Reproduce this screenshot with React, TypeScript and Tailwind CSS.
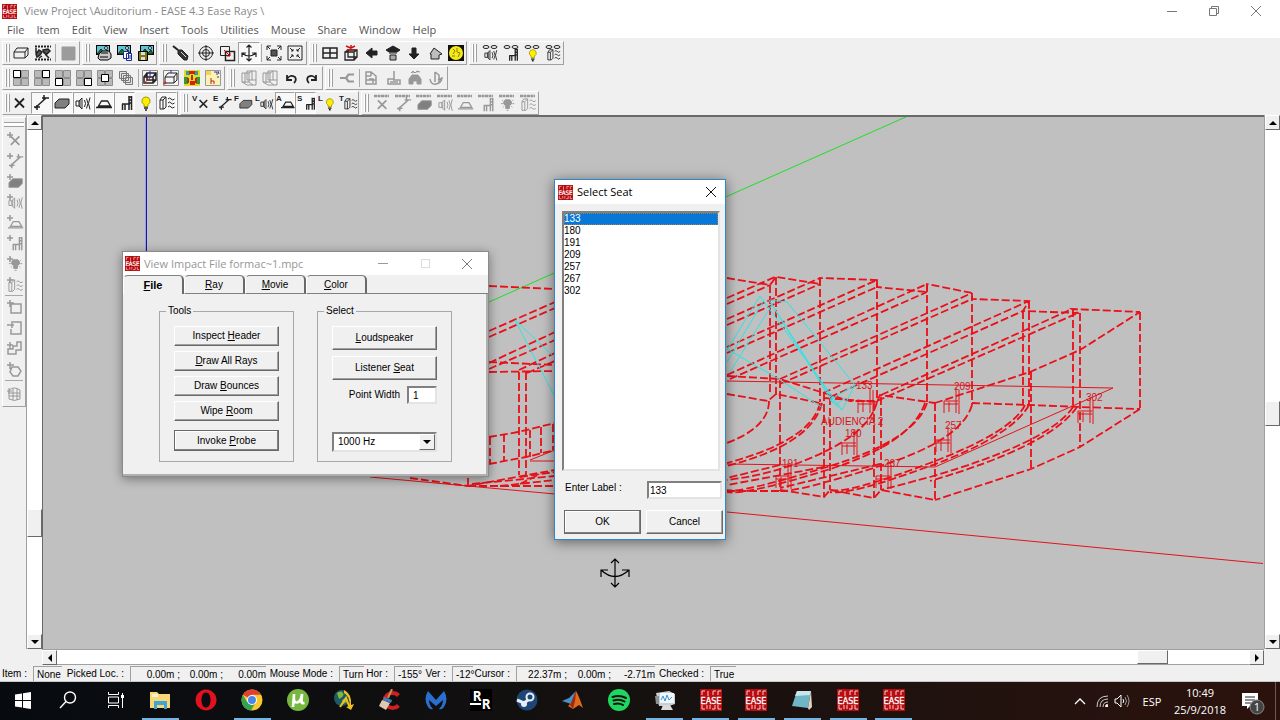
import { useState } from "react";
import type { ReactNode } from "react";
import clsx from "clsx";

const UI = "font-['Liberation_Sans',Arial,sans-serif]";
const SEGOE = "font-['Open_Sans','Noto_Sans',sans-serif]";

/* ---------- toolbar glyphs, all on a 16 x 16 grid ---------- */

const quad = (
  <path d="M0.500 0.500h7v7h-7zM8.500 0.500h7v7h-7zM0.500 8.500h7v7h-7zM8.500 8.500h7v7h-7z" fill="#b9b9b9" stroke="#8e8e8e" />
);

const picture = (
  <g>
    <rect x="0.500" y="0.500" width="13" height="9" fill="#5cc6d8" stroke="#000" />
    <path d="M1 9l4-5 3 4 3-3 2 4z" fill="#1e7a2a" />
    <circle cx="10" cy="3" r="1.500" fill="#fff" />
  </g>
);

const glyphs: Record<string, ReactNode> = {
  // room item kinds
  vertex: <path d="M3 3.500l9 9M12 3.500l-9 9" strokeWidth="1.800" />,
  edge: <path d="M2 13L13 3M11 0v5M9 3h7M4 10v5M1 12h6" strokeWidth="1.500" />,
  face: <path d="M1 13V8l4-4h10v5l-4 4z" fill="#808080" />,
  speaker: <path d="M1 6h3v5H1zM4 6l3-3v11l-3-3M5 5v7M9.500 5q2 3.500 0 7M11.500 3.500q3 5 0 10M15 2.500q-3 6 0 12" />,
  audience: <path d="M0 12.500h16M2.500 11l3-5h6l3 5z" strokeWidth="1.300" />,
  chair: <path d="M12 1v14M14.500 1v14M12 2h2M12 5h2M12 8h2M5 9h8M5.500 9v6M8 9v6" strokeWidth="1.500" />,
  lamp: (
    <g>
      <path d="M8 2a4 4 0 0 0-2 7.500v2h4v-2A4 4 0 0 0 8 2z" fill="#ffee00" stroke="#a09a00" />
      <path d="M6 13h4M7 15h2" strokeWidth="1.500" />
    </g>
  ),
  lampGray: <path d="M8 3a3 3 0 0 0-2 6v3h4V9A3 3 0 0 0 8 3zM7 14h2M2 3l1 1M14 3l-1 1M1 7h2M13 7h2M3 11l1-1M13 11l-1-1" fill="currentColor" />,
  absorber: <path d="M1 5l2-3h4v10l-2 2H1zM1 5h3v9M4 5l3-3M9 4q1.500-2 3 0t3.500 0M9 8q1.500-2 3 0t3.500 0M9 12q1.500-2 3 0t3.500 0" />,

  box: <path d="M1 7l3-4h11v7l-3 3H1zM1 7h11v6M12 7l3-4" />,
  film: (
    <g>
      <path d="M0 1.500h16M0 14.500h16" strokeWidth="2" strokeDasharray="2 1" />
      <path d="M1 3v5M1 9l3-4 3 2-2 3-3 2zM8 5l5-1 2 2-3 3-3-1zM10 9l4 4M7 11l-3 2" fill="#555" strokeWidth="1.500" />
    </g>
  ),
  stop: <path d="M2 2h13v13H2z" fill="#9b9b9b" stroke="#9b9b9b" />,
  printPic: (
    <g>
      {picture}
      <path d="M3 9l3-3h7l2 3v4l-3 2H4l-2-2z" fill="#c8c8c8" stroke="#000" />
      <path d="M5 8h7M4 12h8" stroke="#000" />
    </g>
  ),
  copyPic: (
    <g>
      {picture}
      <path d="M6.500 6.500h5v7h-5zM9.500 8.500h5v7h-5z" fill="#fff" stroke="#1a2a9a" />
      <path d="M11 11h3M11 13h3" stroke="#1a2a9a" />
    </g>
  ),
  savePic: (
    <g transform="translate(2 0)">
      {picture}
      <path d="M-1.500 6.500h9v9h-9z" fill="#7c7a10" stroke="#000" />
      <path d="M1 7h4v3H1zM1 12h4v3H1z" fill="#ddd" stroke="none" />
    </g>
  ),
  probe: (
    <g>
      <path d="M0 1l5 4" strokeWidth="2" />
      <path d="M5 5l4 0 6 6-1 4-3 0-6-6z" fill="#333" />
      <path d="M8 7l5 5" stroke="#ddd" />
    </g>
  ),
  target: (
    <g>
      <circle cx="8" cy="8" r="6.500" />
      <circle cx="8" cy="8" r="3.500" />
      <path d="M8 0v16M0 8h16" />
    </g>
  ),
  zoomRect: (
    <g>
      <path d="M1.500 1.500h9v9h-9z" />
      <path d="M6.500 6.500h9v9h-9z" strokeWidth="1.500" />
      <path d="M5 5l6 6M11 8v3H8" stroke="#d00000" />
    </g>
  ),
  turn: <path d="M8 0v16M5.500 2.500L8 0l2.500 2.500M5.500 13.500L8 16l2.500-2.500M1 8q7 6 14 0M1 12V8h4M15 12V8h-4" strokeWidth="1.200" />,
  fit: (
    <g>
      <path d="M5 5h6v6H5z" fill="#555" />
      <path d="M1 5V1h4M11 1h4v4M15 11v4h-4M5 15H1v-4M1 1l3 3M15 1l-3 3M15 15l-3-3M1 15l3-3" />
    </g>
  ),
  shrink: <path d="M1 1h14v14H1zM3 3l3 3M6 4v2H4M13 3l-3 3M10 4v2h2M3 13l3-3M4 10h2v2M13 13l-3-3M12 10h-2v2" />,
  panes: <path d="M1 3h14v10H1zM8 3v10M1 8h14" strokeWidth="1.500" />,
  wireRed: (
    <g>
      <path d="M2 7h9v8H2zM5 5h9v7H5zM2 7l3-2M11 7l3-2M11 15l3-3" strokeWidth="1.300" />
      <path d="M3 1l9 4M12 1L4 5M8 0v6" stroke="#c81414" strokeWidth="1.500" />
    </g>
  ),
  left: <path d="M2 8l6-5v3h5v4H8v3z" fill="currentColor" />,
  top: (
    <g>
      <path d="M1 5l7-4 7 4-3 2H4z" fill="currentColor" />
      <path d="M4 8h8M5 10h6v5H5z" fill="#aaa" />
    </g>
  ),
  down: <path d="M8 14L3 9h3V3h4v6h3z" fill="currentColor" />,
  house: <path d="M3 9l4-6 8 6-3 1v4H4V9z" fill="#bdbdbd" />,
  globe: (
    <g>
      <path d="M0 0h16v16H0z" fill="#111" stroke="none" />
      <circle cx="8" cy="8" r="7" fill="#f5e918" stroke="none" />
      <path d="M5 4l2 2-2 3M9 3v4l3 1-2 4M4 11h3" stroke="#8c7f00" />
    </g>
  ),
  paneA: <g>{quad}<path d="M0.500 0.500h7v7h-7z" fill="#fff" stroke="#000" /></g>,
  paneB: <g>{quad}<path d="M8.500 0.500h7v7h-7z" fill="#fff" stroke="#000" /></g>,
  paneC: <g>{quad}<path d="M0.500 8.500h7v7h-7z" fill="#fff" stroke="#000" /></g>,
  paneD: <g>{quad}<path d="M8.500 8.500h7v7h-7z" fill="#fff" stroke="#000" /></g>,
  paneE: <g>{quad}<path d="M4.500 4.500h7v7h-7z" fill="#fff" stroke="#000" /></g>,
  cascade: <path d="M1.500 1.500h7v7h-7zM3.500 3.500h7v7h-7zM5.500 5.500h7v7h-7zM7.500 7.500h7v7h-7z" fill="#e4e4e4" stroke="#777" />,
  cube: (
    <g>
      <path d="M0.500 0.500h15v15H0.500z" fill="#f4f4f4" stroke="#888" />
      <path d="M2 7h9v6H2zM5 3h9v7H5zM2 7l3-4M11 7l3-4M11 13l3-3" strokeWidth="1.500" />
      <path d="M8 1v7" stroke="#2222cc" />
      <path d="M2 13l6-5" stroke="#cc2222" />
    </g>
  ),
  cubeOpen: (
    <g>
      <path d="M0.500 0.500h15v15H0.500z" fill="#f4f4f4" stroke="#888" />
      <path d="M2 7h9v6H2zM2 7l3-4h9v7l-3 3M11 7l3-4" />
      <path d="M8 0v3" stroke="#2222cc" />
      <path d="M1 14l2-2" stroke="#cc2222" strokeWidth="2" />
    </g>
  ),
  heat: (
    <g stroke="none">
      <path d="M0 0h16v16H0z" fill="#e8d820" />
      <path d="M2 1h4v4H2zM10 1h4v4h-4z" fill="#28a0a8" />
      <path d="M5 1h6v3H5zM6 11h5v4H6z" fill="#d82010" />
      <path d="M0 7h4v7H0zM12 7h4v7h-4z" fill="#2f9c35" />
      <path d="M7 5h2v5H7zM3 8h2v5H3zM11 8h2v5h-2z" fill="#c02c10" />
    </g>
  ),
  scatter: (
    <g>
      <path d="M0.500 0.500h15v15H0.500z" fill="#fbf3b4" stroke="#999" />
      <path d="M9 2h3v3M13 1l1 3M12 7h2" stroke="#3030c0" />
      <path d="M6 8v6M6 11h3v3" stroke="#c02020" />
      <path d="M1 1h5v4H1z" fill="#f4d44a" stroke="none" />
    </g>
  ),
  mesh: <path d="M1 3h7v9H1zM6 1h9v9H6zM1 12l5 3h9v-5M8 3l3-2M8 12l4 3M11 1v9M4 3v10" />,
  undo: <path d="M4 5v5h5M4 9q3-5 8-2 2 3-1 6" strokeWidth="1.800" />,
  redo: <path d="M12 5v5H7M12 9q-3-5-8-2-2 3 1 6" strokeWidth="1.800" />,
  wrench: <path d="M1 8h6M15 4.500H9.500L7 8l2.500 3.500H15" strokeWidth="2.200" />,
  hall: <path d="M3 2h5l5 4v8H3zM3 6h5M6 9h4v4M3 10h10M8 2v4" strokeWidth="1.500" />,
  level: <path d="M9 1v8H3v5h12v-4H8M5 12h8" strokeWidth="1.500" />,
  car: <path d="M2 9l3-4h6l3 4v5h-4v-3H6v3H2zM4 3l2-2 2 2 2-2 3 1" fill="currentColor" />,
  hook: <path d="M2 9q1 6 6 5t6-6l-4 2M7 2v10M7 2l4 3v8" strokeWidth="1.500" />,
  // outline tools on the left
  square: <path d="M5 5h10v9H5zM1 4h7M4 1v7" strokeWidth="1.500" />,
  door: <path d="M5 2h10v12H5V9M1 5h7M6 3v5" strokeWidth="1.500" />,
  poly: <path d="M2 14h8v-4h5V2h-4v4H7v3H2zM1 5h6M4 2v7" strokeWidth="1.500" />,
  round: <path d="M6 6h6l3 4-3 5H7l-3-4zM1 4h7M4 1v7" strokeWidth="1.500" />,
  sphere: <path d="M3 4q5-4 11 0v9q-6 3-11 0zM3 7h11M3 10h11M7 3v11M11 3v11M1 5h5M3 2v6" />,
};

const bodyTransform = {
  plus: "translate(2 2) scale(0.95)",
  bar: "translate(1 2) scale(0.95)",
  eyes: "translate(2 3) scale(0.85)",
};

function Glyph({ name, mark, letter }: { name: string; mark?: "plus" | "bar" | "eyes"; letter?: string }) {
  return (
    <svg viewBox="0 0 16 16" className="size-4 overflow-visible" fill="none" stroke="currentColor" aria-hidden="true">
      <g transform={mark ? bodyTransform[mark] : letter ? "translate(4 2) scale(0.85)" : undefined}>{glyphs[name]}</g>
      {letter && (
        <text x="-1" y="6" fontSize="8" fontWeight="bold" fill="currentColor" stroke="none" fontFamily="Liberation Sans">
          {letter}
        </text>
      )}
      {mark === "plus" && <path d="M1 4h6M4 1v6" strokeWidth="1.500" />}
      {mark === "bar" && <path d="M0 1h15" strokeWidth="2.500" strokeDasharray="3 0.500" />}
      {mark === "eyes" && (
        <g>
          <ellipse cx="4" cy="2" rx="3" ry="1.500" />
          <ellipse cx="12" cy="2" rx="3" ry="1.500" />
        </g>
      )}
    </svg>
  );
}

interface Tool {
  id: string;
  label: string;
  on?: boolean;
  mark?: "plus" | "bar" | "eyes";
  letter?: string;
  off?: boolean;
}

function ToolButton({ tool }: { tool: Tool }) {
  return (
    <button
      type="button"
      aria-label={tool.label}
      aria-pressed={tool.on}
      className={clsx(
        "flex min-w-0 flex-1 items-center justify-center border",
        tool.on ? "border-t-[#a0a0a0] border-l-[#a0a0a0] border-r-white border-b-white bg-[#f8f8f8]" : "border-transparent",
        tool.off ? "text-[#989898]" : "text-[#222]"
      )}
    >
      <Glyph name={tool.id} mark={tool.mark} letter={tool.letter} />
    </button>
  );
}

function ToolGroup({ tools, className, first }: { tools: (Tool | null)[]; className: string; first?: boolean }) {
  return (
    <div role="toolbar" className={clsx("flex h-6 border border-t-white border-l-white border-r-[#a0a0a0] border-b-[#a0a0a0]", className)}>
      <div className={clsx("flex shrink-0 gap-px py-0.5 pl-0.5", first ? "w-[7px]" : "w-2.5")}>
        <span className="w-[2px] border-r border-[#a0a0a0] bg-white" />
        <span className="w-[2px] border-r border-[#a0a0a0] bg-white" />
      </div>
      {tools.map((t, i) =>
        t ? <ToolButton key={i} tool={t} /> : <span key={i} className="mx-px my-0.5 w-px shrink-0 bg-[#a8a8a8]" />
      )}
    </div>
  );
}

const kinds = ["vertex", "edge", "face", "speaker", "audience", "chair", "lamp", "absorber"];
const letters = ["V", "E", "F", "L", "A", "S", "L", "T"];
const grayKinds = kinds.map((k) => (k === "lamp" ? "lampGray" : k));
const t = (id: string, extra?: Partial<Tool>): Tool => ({ id, label: id, ...extra });

const rows: { className: string; tools: (Tool | null)[] }[][] = [
  [
    { className: "w-[78px]", tools: [t("box"), t("film"), null, t("stop")] },
    { className: "w-[75px]", tools: [t("printPic"), t("copyPic"), t("savePic")] },
    { className: "w-[148px]", tools: [t("probe"), null, t("target"), t("zoomRect"), t("turn", { on: true }), null, t("fit"), t("shrink")] },
    { className: "w-[158px]", tools: [t("panes"), t("wireRed"), t("left"), t("top"), t("down"), t("house"), t("globe")] },
    { className: "w-[95px]", tools: ["speaker", "chair", "lamp", "absorber"].map((k) => t(k, { mark: "eyes", label: `show ${k}` })) },
  ],
  [
    {
      className: "w-[223px]",
      tools: [t("paneA"), t("paneB"), t("paneC"), t("paneD"), t("paneE"), t("cascade"), null, t("cube"), t("cubeOpen"), t("heat"), t("scatter")],
    },
    { className: "w-[96px]", tools: [t("mesh", { off: true }), t("mesh", { off: true }), t("undo"), t("redo")] },
    { className: "w-[123px]", tools: [t("wrench", { off: true }), null, t("hall", { off: true }), t("level", { off: true }), t("car", { off: true }), t("hook", { off: true })] },
  ],
  [
    { className: "w-[176px]", tools: kinds.map((k) => t(k, { on: k !== "vertex" && k !== "lamp" })) },
    { className: "w-[179px]", tools: kinds.map((k, i) => t(k, { letter: letters[i], on: k === "audience" || k === "chair", label: `label ${k}` })) },
    { className: "w-[178px]", tools: grayKinds.map((k) => t(k, { mark: "bar", off: true, label: `hide ${k}` })) },
  ],
];

/* ---------- small shared parts ---------- */

function EaseLogo({ className }: { className: string }) {
  return (
    <svg viewBox="0 0 22 22" className={className} aria-hidden="true">
      <rect width="22" height="22" fill="#b80c10" />
      <text x="11" y="15" textAnchor="middle" fontSize="9" fill="#fff" stroke="#fff" strokeWidth="0.300" fontFamily="'DejaVu Sans Condensed','DejaVu Sans',sans-serif">
        EASE
      </text>
      <path d="M2 2v4M2 2h3M8 2v5M13 2h3M13 2v4M18 2h3M18 2v4M2 20v-4M2 20h3M7 20v-4M10 20v-4M15 20v-4M12 20h3M18 20h3M18 20v-4" fill="none" stroke="#f4d0d0" />
    </svg>
  );
}

const raised = "border border-t-white border-l-white border-r-[#696969] border-b-[#696969] bg-[#f0f0f0]";

function Arrow({ dir }: { dir: "up" | "down" | "left" | "right" }) {
  const d = { up: "M0 6l4-4 4 4z", down: "M0 2l4 4 4-4z", left: "M6 0L2 4l4 4z", right: "M2 0l4 4-4 4z" }[dir];
  return (
    <svg viewBox="0 0 8 8" className="size-2" aria-hidden="true">
      <path d={d} fill="#000" />
    </svg>
  );
}

function ScrollButton({ dir }: { dir: "up" | "down" | "left" | "right" }) {
  return (
    <button type="button" aria-label={`Scroll ${dir}`} className={clsx("flex size-[15px] shrink-0 items-center justify-center", raised)}>
      <Arrow dir={dir} />
    </button>
  );
}

function VScroll({ before, after, thumb }: { before: string; after: string; thumb: string }) {
  return (
    <div className="flex shrink-0 pb-4">
      <div className="flex w-4 flex-col border-l border-[#a0a0a0] bg-white">
        <ScrollButton dir="up" />
        <span className={before} />
        <span className={clsx("shrink-0", raised, thumb)} />
        <span className={after} />
        <ScrollButton dir="down" />
      </div>
    </div>
  );
}

function PushButton({ children, className, isDefault }: { children: ReactNode; className?: string; isDefault?: boolean }) {
  return (
    <button
      type="button"
      className={clsx(
        "flex items-center justify-center border bg-[#f0f0f0] whitespace-nowrap",
        isDefault
          ? "border-[#696969] shadow-[inset_-1px_-1px_0_#808080,inset_1px_1px_0_#fff]"
          : "border-t-white border-l-white border-r-[#696969] border-b-[#696969] shadow-[inset_-1px_-1px_0_#a0a0a0]",
        className
      )}
    >
      <span>{children}</span>
    </button>
  );
}

const sunken = "border-2 border-t-[#808080] border-l-[#808080] border-r-[#e3e3e3] border-b-[#e3e3e3] bg-white";

/* ---------- wireframe of the hall ---------- */

const heavy = [
  // roof outline
  "M727 278L770 285L776 277L820 284V278L877 280V287L927 292V284L972 293V299L1029 301L1023 311L1078 313L1072 309L1140 312",
  // uprights
  "M770 285V395", "M776 277V395", "M820 278V402", "M877 280V402", "M927 284V403", "M972 293V405",
  "M1023 311V405", "M1029 301V405", "M1073 309V407", "M1080 313V447", "M1140 312V409", "M1031 372V469",
  "M935 403V500", "M780 380V491", "M824 393V497", "M830 397V490", "M874 403V498", "M881 397V490",
  // ceiling slopes
  "M727 298L775 277", "M727 304L770 285", "M727 319L820 278", "M727 325L820 284", "M727 347L877 280",
  "M727 353L877 287", "M727 375L927 284", "M730 379L927 292", "M780 379L972 293", "M780 384L972 299",
  "M823 393L1029 301", "M830 397L1023 311", "M881 395L1072 309", "M877 401L1078 313",
  "M935 403L1030 372L1080 350L1140 312",
  // stage edge
  "M727 376L780 379L824 393L850 401H877", "M727 394L768 401L776 394L820 403", "M824 398L877 402L880 395L935 403",
  "M972 403L1030 405L1080 407L1140 409",
  // seating rows
  "M769 401Q769 427 727 443", "M820 403Q812 440 727 463", "M822 403Q812 444 727 466",
  "M877 402Q870 430 824 452T727 480", "M927 403Q915 440 827 467T727 490", "M925 403Q911 444 827 470T727 492",
  "M972 405Q962 440 880 466T780 491", "M1025 405Q1012 432 930 463T830 490", "M1029 405Q1012 436 930 466T830 492",
  "M1073 407Q1050 442 930 477L881 490", "M1077 407Q1050 446 930 481", "M780 465L727 478", "M824 467L727 485", "M880 464L780 488",
  "M1140 409L1080 447L1031 469L935 500", "M780 490L824 497L830 490L874 498L881 490L935 500", "M727 491H780",
  // left wing
  "M489 286L555 289", "M489 331L555 302", "M489 337L555 308", "M489 363L555 332", "M489 369L555 340",
  "M519 370L555 353", "M527 373L555 361", "M489 362L555 365", "M489 372L555 371", "M519 372V475", "M526 372V475",
  "M489 437L518 432L555 423", "M489 464L526 457L555 450", "M490 437V464", "M504 434V461", "M530 430V457",
  "M541 427V453", "M553 424V450", "M410 478L468 486L555 470", "M468 486H555", "M468 478V487", "M472 484L555 476",
  "M500 486L555 480", "M520 477L555 472", "M520 484L540 474",
];

const chairs = [
  [858, 388], [842, 430], [776, 463], [876, 463], [944, 388], [936, 427], [1078, 398],
];

const labels: [number, number, string][] = [
  [856, 389, "133"], [845, 437, "180"], [782, 467, "191"], [954, 390, "209"],
  [945, 429, "257"], [884, 467, "267"], [1086, 401, "302"], [821, 425, "AUDIENCIA 2"],
];

function Wireframe() {
  return (
    <svg viewBox="43 117 1221 532" preserveAspectRatio="xMinYMin slice" className="absolute inset-0 size-full" fill="none" role="img" aria-label="Auditorium wireframe">
      <path d="M145.500 117V260" stroke="#9a9af0" />
      <path d="M146.500 117V260" stroke="#1414a8" />
      <path d="M489 302L908 116" stroke="#1ee01e" />
      <g stroke="#e2131b" strokeWidth="1">
        <path d="M370 477L555 494M727 512L1263 563.500M727 381L1113 388L935 467L727 464M530 461h25M530 460L555 450" />
        {chairs.map(([x, y]) => (
          <path key={`${x}-${y}`} d={`M${x} ${y + 13}h14M${x} ${y + 16}h14M${x} ${y + 13}v12M${x + 5} ${y + 14}v10M${x + 12} ${y}v25M${x + 15} ${y + 2}v24`} />
        ))}
      </g>
      <g stroke="#ea0f18" strokeWidth="1.800" strokeDasharray="8 3">
        {heavy.map((d) => (
          <path key={d} d={d} />
        ))}
      </g>
      <path
        d="M515 320L555 397M515 320L552 355M760 296L727 350M764 300L727 362M773 303L730 372M727 349L777 378L823 408M760 296L842 410M775 310L833 403M769 300L836 405L845 398M787 302L855 385L842 410L830 400L855 385M770 300L787 302"
        stroke="#2fe3e6"
      />
      <g fill="#d9141c" fontSize="10" fontFamily="Liberation Sans">
        {labels.map(([x, y, s]) => (
          <text key={s} x={x} y={y}>{s}</text>
        ))}
      </g>
      <path
        d="M615 559v28M611 563l4-4 4 4M611 583l4 4 4-4M601 570q14 13 28 0M601 577v-7h7M629 577v-7h-7"
        stroke="#000"
        strokeWidth="1.200"
      />
    </svg>
  );
}

/* ---------- floating windows ---------- */

function ImpactWindow() {
  const [tab, setTab] = useState("File");
  const [hz, setHz] = useState("1000 Hz");
  return (
    <section className={clsx("absolute top-[251px] left-[122px] flex h-[226px] w-[367px] flex-col border border-[#8a8a8a] bg-[#f0f0f0] text-[10px] leading-[14px] shadow-[0_2px_10px_rgba(0,0,0,0.4)]", UI)}>
      <header className="flex h-[23px] shrink-0 items-center bg-white pl-0.5">
        <EaseLogo className="size-[15px]" />
        <h2 className={clsx("ml-1 grow text-[11px] text-[#969696]", SEGOE)}>View Impact File formac~1.mpc</h2>
        <button type="button" aria-label="Minimize" className="flex w-[42px] justify-center"><span className="h-px w-2.5 bg-[#999]" /></button>
        <button type="button" aria-label="Maximize" className="flex w-[42px] justify-center"><span className="size-[9px] border border-[#ddd]" /></button>
        <button type="button" aria-label="Close" className="flex w-[42px] justify-center text-[#808080]">
          <svg viewBox="0 0 10 10" className="size-2.5" stroke="currentColor"><path d="M0 0l10 10M10 0L0 10" /></svg>
        </button>
      </header>
      <div role="tablist" className="flex h-[19px] shrink-0">
        {["File", "Ray", "Movie", "Color"].map((name) => (
          <button
            key={name}
            type="button"
            role="tab"
            aria-selected={tab === name}
            onClick={() => setTab(name)}
            className={clsx(
              "w-[61px] rounded-t-[5px] border-t border-l border-t-[#808080] border-l-white border-r-2 border-r-[#696969]",
              tab === name ? "text-[11px] font-bold" : "border-b border-b-[#808080]"
            )}
          >
            <u>{name[0]}</u>{name.slice(1)}
          </button>
        ))}
        <span className="grow border-b border-[#808080]" />
      </div>
      <div role="tabpanel" className="flex grow gap-[23px] border-r-2 border-b-2 border-r-[#b0b0b0] border-b-[#b0b0b0] pt-[10px] pl-[36px]">
        <fieldset className="h-[158px] w-[135px] border border-[#a8a8a8] px-3.5">
          <legend className="-ml-2 px-0.5">Tools</legend>
          <div className="flex flex-col gap-[5px] pt-2">
            <PushButton className="h-5">Inspect <u>H</u>eader</PushButton>
            <PushButton className="h-5"><u>D</u>raw All Rays</PushButton>
            <PushButton className="h-5">Draw <u>B</u>ounces</PushButton>
            <PushButton className="h-5">Wipe <u>R</u>oom</PushButton>
            <PushButton className="mt-1 h-[21px]" isDefault>Invoke <u>P</u>robe</PushButton>
          </div>
        </fieldset>
        <fieldset className="h-[158px] w-[135px] border border-[#a8a8a8] px-3.5">
          <legend className="-ml-2 px-0.5">Select</legend>
          <div className="flex flex-col pt-2">
            <PushButton className="mb-1.5 h-6"><u>L</u>oudspeaker</PushButton>
            <PushButton className="mb-1.5 h-6">Listener <u>S</u>eat</PushButton>
            <label className="flex items-center justify-end gap-[7px]">
              <span>Point Width</span>
              <input defaultValue="1" className={clsx("h-[18px] w-[30px] pl-1", sunken)} />
            </label>
            <div className="relative mt-7">
              <select aria-label="Frequency" value={hz} onChange={(e) => setHz(e.target.value)} className={clsx("block h-5 w-full appearance-none pl-1", sunken)}>
                <option>500 Hz</option>
                <option>1000 Hz</option>
                <option>2000 Hz</option>
              </select>
              <span className={clsx("pointer-events-none absolute inset-y-0.5 right-0.5 flex w-4 items-center justify-center", raised)}>
                <Arrow dir="down" />
              </span>
            </div>
          </div>
        </fieldset>
      </div>
    </section>
  );
}

const seats = ["133", "180", "191", "209", "257", "267", "302"];

function SeatWindow() {
  const [seat, setSeat] = useState("133");
  return (
    <section role="dialog" aria-label="Select Seat" className={clsx("absolute top-[179px] left-[554px] flex h-[361px] w-[172px] flex-col border border-[#2f86c8] bg-[#f0f0f0] text-[10px] leading-[12px] shadow-[0_2px_12px_rgba(0,0,0,0.5)]", UI)}>
      <header className="flex h-6 shrink-0 items-center bg-white pr-2 pl-[3px]">
        <EaseLogo className="size-[15px]" />
        <h2 className={clsx("ml-1 grow text-[11px] text-black", SEGOE)}>Select Seat</h2>
        <button type="button" aria-label="Close" className="p-px">
          <svg viewBox="0 0 10 10" className="size-2.5" stroke="#111"><path d="M0 0l10 10M10 0L0 10" /></svg>
        </button>
      </header>
      <ul role="listbox" aria-label="Seats" className={clsx("mt-[7px] mr-[5px] ml-[7px] h-[260px] shrink-0", sunken)}>
        {seats.map((s) => (
          <li
            key={s}
            role="option"
            aria-selected={s === seat}
            onClick={() => setSeat(s)}
            className={s === seat ? "bg-[#0878d8] text-white outline-1 -outline-offset-1 outline-dotted outline-[#a08050]" : "text-black"}
          >
            {s}
          </li>
        ))}
      </ul>
      <div className="mt-2.5 flex items-center justify-between pr-[3px] pl-2.5">
        <label htmlFor="seat-label" className="pb-1">Enter Label :</label>
        <input id="seat-label" value={seat} onChange={(e) => setSeat(e.target.value)} className={clsx("h-[18px] w-[75px] pl-px", sunken)} />
      </div>
      <div className="mt-[11px] flex gap-[5px] pr-0.5 pl-[9px]">
        <PushButton className="h-6 flex-1" isDefault>OK</PushButton>
        <PushButton className="h-6 flex-1">Cancel</PushButton>
      </div>
    </section>
  );
}

/* ---------- status bar ---------- */

function Field({ label, values, labelWidth, width }: { label: string; values: string[]; labelWidth: string; width: string }) {
  return (
    <div className="flex">
      <span className={clsx("pr-1.5 text-right", labelWidth)}>{label}</span>
      <output className={clsx("flex h-[15px] border-t border-l border-[#a0a0a0]", values.length > 1 ? "pl-1.5" : "pl-[3px]", width)}>
        {values.map((v, i) => (
          <span key={i} className={clsx(values.length > 1 && "flex-1 text-right")}>{v}</span>
        ))}
      </output>
    </div>
  );
}

function StatusBar() {
  return (
    <footer className={clsx("flex h-[17px] shrink-0 border-b border-[#c8c8c8] bg-[#f0f0f0] pt-px text-[10px] leading-[16px] whitespace-nowrap", UI)}>
      <Field label="Item :" values={["None"]} labelWidth="w-[33px]" width="w-[29px]" />
      <Field label="Picked Loc. :" values={["0.00m ;", "0.00m ;", "0.00m"]} labelWidth="w-[68px]" width="w-[136px]" />
      <Field label="Mouse Mode :" values={["Turn"]} labelWidth="w-[73px]" width="w-[25px]" />
      <Field label="Hor :" values={["-155°"]} labelWidth="w-[30px]" width="w-[28px]" />
      <Field label="Ver :" values={["-12°"]} labelWidth="w-[30px]" width="w-[21px]" />
      <Field label="Cursor :" values={["22.37m ;", "0.00m ;", "-2.71m"]} labelWidth="w-[43px]" width="w-[139px]" />
      <Field label="Checked :" values={["True"]} labelWidth="w-[55px]" width="w-[26px]" />
    </footer>
  );
}

/* ---------- taskbar ---------- */

const apps: { name: string; open?: boolean; icon: ReactNode }[] = [
  { name: "Start", icon: <path d="M3 5.500l7-1v6.500H3zM11 4.300l8-1.200V11h-8zM3 12h7v6.500l-7-1zM11 12h8v7.900l-8-1.200z" fill="#fff" /> },
  { name: "Search", icon: <g fill="none" stroke="#fff" strokeWidth="1.400"><circle cx="12" cy="8.500" r="5.500" /><path d="M8 12.500L2 19" /></g> },
  { name: "Task View", icon: <g fill="none" stroke="#fff"><path d="M4.500 3v2.500h10V3M4.500 8h10v6h-10zM4.500 19v-2.500h10V19M18.500 4v15" /><path d="M17 7.500h3" strokeWidth="3" /></g> },
  { name: "Explorer", open: true, icon: <g><path d="M1 3h7l2 2h11v14H1z" fill="#f6d878" /><path d="M3 5h6v3H3z" fill="#fff3c4" /><path d="M5 12h13v8h-3v-4H8v4H5z" fill="#3fa5d5" /></g> },
  { name: "Opera", icon: <path fillRule="evenodd" d="M11 0.500a10.500 10.500 0 1 0 0.100 0zM11 3.500c3 0 4.500 3.500 4.500 7.500s-1.500 7.500-4.500 7.500-4.500-3.500-4.500-7.500 1.500-7.500 4.500-7.500z" fill="#e0121e" /> },
  {
    name: "Chrome", open: true,
    icon: (
      <g>
        <circle cx="11" cy="11" r="10.500" fill="#f9c92c" />
        <path d="M11 11L1.900 5.800A10.500 10.500 0 0 1 20.100 5.800H11z" fill="#e04035" />
        <path d="M1.900 5.800A10.500 10.500 0 0 0 10 21.500l4.500-8L11 11 6 13z" fill="#33a352" />
        <circle cx="11" cy="11" r="5" fill="#fff" />
        <circle cx="11" cy="11" r="4" fill="#4a86e8" />
      </g>
    ),
  },
  { name: "uTorrent", icon: <g><circle cx="11" cy="11" r="11" fill="#76b83f" /><path d="M7 5l-1 13M7 6q-1 8 3 7.500T15 5M15 5l-.5 8q0 1.500 3 1" fill="none" stroke="#fff" strokeWidth="2.600" /></g> },
  { name: "Download Manager", icon: <g><circle cx="9" cy="9" r="8" fill="#1d5a66" /><path d="M4 4q4-3 6 0t-4 6zM9 11l4-2 1 4-4 2z" fill="#7fb83a" /><path d="M11 1q8 4 7 15l3-1-3 6-5-3 3-1q2-9-5-13z" fill="#f3c01d" /><path d="M7 18l6-9 3 8" stroke="#f3c01d" fill="none" strokeWidth="2" /></g> },
  { name: "CCleaner", icon: <g><path d="M21 5a10 9.500 0 1 0 0 13l-3-3a6 5.500 0 1 1 0-7z" fill="#cf1f22" /><path d="M13 0l-4 9" stroke="#c98a54" strokeWidth="2" /><path d="M5 8l8 3-1 3-8-3z" fill="#3b7fc4" /><path d="M3 11l8 3-4 7-7-4z" fill="#dcc9b0" /></g> },
  { name: "Malwarebytes", icon: <path d="M3 18Q-2 10 3 2l8 9 8-9q5 8 0 16-2 3-5 2 4-4 4-9l-7 6-7-6q0 5 4 9-3 1-5-2z" fill="#2a6fd0" /> },
  { name: "RoadRunner", icon: <g><path d="M0 0h22v22H0z" fill="#000" /><g fill="#fff" fontFamily="DejaVu Sans Mono" fontWeight="bold" fontSize="14"><text x="3" y="12">R</text><text x="12" y="20">R</text></g><path d="M0 15h11" stroke="#fff" strokeWidth="2" /></g> },
  { name: "Steam", icon: <g><circle cx="11" cy="11" r="10.500" fill="#1d4677" /><circle cx="14" cy="8" r="3.500" fill="none" stroke="#e8eef5" strokeWidth="2" /><path d="M1 11l7 3 4-3" stroke="#e8eef5" strokeWidth="3" fill="none" /><circle cx="8" cy="15" r="3" fill="#e8eef5" /></g> },
  { name: "MATLAB", icon: <g><path d="M0 12l7-3 7-7-5 13z" fill="#4a90c8" /><path d="M6 17q5-4 8-15 3 5 7 17l-4-3-6 4z" fill="#e06a1c" /><path d="M14 2q0 9-3 18l-3-4z" fill="#9e2a12" /></g> },
  { name: "Spotify", icon: <g><circle cx="11" cy="11" r="11" fill="#1ed760" /><path d="M4.500 8q7-2.500 13.500 1M5.500 11.500q6-2 11 1M6 15q5-1.500 9 1" fill="none" stroke="#111" strokeWidth="2" strokeLinecap="round" /></g> },
  { name: "Monitor", open: true, icon: <g><path d="M2 4l13-2 6 3v10l-6 2H5z" fill="#c9d0d4" /><path d="M6 4h14v10H6z" fill="#f0f6fa" /><path d="M7 11l2-4 2 5 2-6 2 5 3-3" stroke="#3c94d0" fill="none" /><path d="M9 16h7l3 5H7z" fill="#dcdcdc" /><path d="M1 7h4v8H2z" fill="#8a9296" /></g> },
  { name: "EASE", open: true, icon: null },
  { name: "EASE Rays", open: true, icon: null },
  { name: "Notes", open: true, icon: <g><path d="M6 2h14l-3 17-16-2z" fill="#6fb7c8" /><path d="M6 2h14l-1 4-15 1z" fill="#c9e6ec" /><path d="M17 19l3-17 1 16-3 3z" fill="#e3d6bc" /></g> },
  { name: "EASE Viewer", open: true, icon: null },
  { name: "EASE Impact", open: true, icon: null },
];

function Taskbar() {
  return (
    <nav aria-label="Taskbar" className={clsx("flex h-[38px] shrink-0 bg-gradient-to-r from-[#070b10] via-[#15110f] to-[#2c120d] text-[11px] leading-[17px] text-white", SEGOE)}>
      <div className="flex w-[917px]">
        {apps.map((a) => (
          <button key={a.name} type="button" aria-label={a.name} className="flex flex-1 flex-col items-center">
            <span className="flex grow items-center">
              {a.icon ? <svg viewBox="0 0 22 22" className="size-[22px]">{a.icon}</svg> : <EaseLogo className="size-[22px]" />}
            </span>
            <span className={clsx("h-0.5 w-[37px]", a.open && "bg-[#76b4e4]")} />
          </button>
        ))}
      </div>
      <div className="ml-auto flex items-center">
        <button type="button" aria-label="Hidden icons" className="w-6 px-1.5">
          <svg viewBox="0 0 12 8" className="h-2 w-3" fill="none" stroke="#fff" strokeWidth="1.300"><path d="M1 7l5-5 5 5" /></svg>
        </button>
        <button type="button" aria-label="Network" className="w-5 px-1">
          <svg viewBox="0 0 12 12" className="size-3" fill="none" stroke="#ccc"><path d="M1 12Q1 1 12 1M4 12q0-8 8-8M7 12q0-5 5-5" /><circle cx="11" cy="11" r="1.500" fill="#fff" /></svg>
        </button>
        <button type="button" aria-label="Volume" className="ml-0.5 w-5">
          <svg viewBox="0 0 16 14" className="h-3.5 w-4" fill="none" stroke="#fff"><path d="M1 5h2l4-4v12L3 9H1zM9 5q1.500 2 0 4" /><path d="M11 3q3 4 0 8M13 1q4 6 0 12" stroke="#999" /></svg>
        </button>
        <button type="button" className="ml-2 w-5">ESP</button>
        <time className="ml-2.5 w-14 text-center">10:49<br />25/9/2018</time>
        <button type="button" aria-label="1 notification" className="relative ml-2 w-[27px] pl-1.5">
          <svg viewBox="0 0 24 24" className="size-6 overflow-visible">
            <path d="M0 4h16v13H8l-3 3v-3H0z" fill="#fff" />
            <path d="M3 8h10M3 11h10M3 14h6" stroke="#222" />
            <circle cx="15" cy="18" r="7" fill="#444" stroke="#888" />
            <text x="15" y="22" textAnchor="middle" fontSize="11" fill="#fff">1</text>
          </svg>
        </button>
        <span className="mr-1 ml-3 h-[38px] w-px bg-[#6a5a56]" />
      </div>
    </nav>
  );
}

/* ---------- page ---------- */

const menu = ["File", "Item", "Edit", "View", "Insert", "Tools", "Utilities", "Mouse", "Share", "Window", "Help"];

export default function App() {
  return (
    <div className={clsx("relative flex h-screen w-full flex-col overflow-hidden bg-[#f0f0f0] text-black", UI)}>
      <header className={clsx("shrink-0 bg-white text-[11px]", SEGOE)}>
        <div className="flex h-[22px] items-center pl-0.5">
          <EaseLogo className="size-[15px]" />
          <h1 className="ml-[7px] grow text-[#8a8a8a]">View Project \Auditorium - EASE 4.3 Ease Rays \</h1>
          <button type="button" aria-label="Minimize" className="flex w-[42px] justify-center"><span className="h-px w-2.5 bg-[#777]" /></button>
          <button type="button" aria-label="Restore" className="flex w-[42px] justify-center">
            <svg viewBox="0 0 10 10" className="size-2.5" fill="none" stroke="#777"><path d="M0.500 2.500h7v7h-7zM2.500 2.500v-2h7v7h-2" /></svg>
          </button>
          <button type="button" aria-label="Close" className="mr-[3px] flex w-[42px] justify-center">
            <svg viewBox="0 0 10 10" className="size-2.5" stroke="#777"><path d="M0 0l10 10M10 0L0 10" /></svg>
          </button>
        </div>
        <nav className="flex h-4 items-center gap-3 pt-px pl-[7px] text-[#555]">
          {menu.map((m) => (
            <button key={m} type="button">{m}</button>
          ))}
        </nav>
      </header>

      <div className="flex shrink-0 flex-col gap-px pt-[3px] pl-0.5">
        {rows.map((groups, r) => (
          <div key={r} className="flex gap-0.5">
            {groups.map((g, i) => (
              <ToolGroup key={i} first={i === 0} className={g.className} tools={g.tools} />
            ))}
          </div>
        ))}
      </div>

      <main className="flex min-h-0 grow">
        <aside className="w-[26px] shrink-0 pt-0.5 pl-0.5">
          <div role="toolbar" className="flex w-6 flex-col border border-t-white border-l-white border-r-[#a0a0a0] border-b-[#a0a0a0]">
            <span className="mx-px mt-1 mb-0.5 h-[5px] border-y border-[#a0a0a0] bg-white" />
            <div className="flex h-[165px] flex-col">
              {grayKinds.map((k) => (
                <ToolButton key={k} tool={t(k, { mark: "plus", off: true, label: `insert ${k}` })} />
              ))}
            </div>
            <span className="mx-0.5 my-px h-px bg-[#a8a8a8]" />
            <div className="flex h-[82px] flex-col">
              {["square", "door", "poly", "round"].map((k) => (
                <ToolButton key={k} tool={t(k, { off: true })} />
              ))}
            </div>
            <span className="mx-0.5 my-px h-px bg-[#a8a8a8]" />
            <div className="flex h-6 flex-col">
              <ToolButton tool={t("sphere", { off: true })} />
            </div>
          </div>
        </aside>
        <VScroll before="grow-[377]" after="grow-[97]" thumb="h-7" />
        <div className="flex min-w-0 grow flex-col">
          <div className="relative grow overflow-hidden border-t-2 border-l border-[#696969] bg-[#c0c0c0]">
            <Wireframe />
          </div>
          <div className="flex h-4 shrink-0 border-y border-[#a0a0a0] bg-white">
            <ScrollButton dir="left" />
            <span className="grow-[1079]" />
            <span className={clsx("w-[31px]", raised)} />
            <span className="grow-[81]" />
            <ScrollButton dir="right" />
          </div>
        </div>
        <VScroll before="grow-[270]" after="grow-[207]" thumb="h-[25px]" />
      </main>

      <StatusBar />
      <Taskbar />

      <ImpactWindow />
      <SeatWindow />
    </div>
  );
}
